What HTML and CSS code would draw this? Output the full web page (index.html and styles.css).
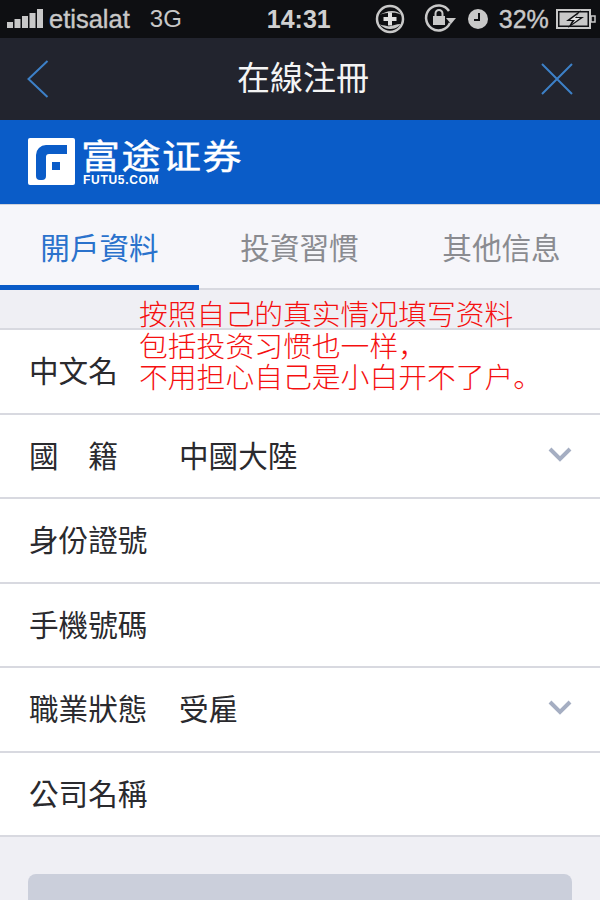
FILE: index.html
```html
<!DOCTYPE html>
<html lang="zh-Hant">
<head>
<meta charset="utf-8">
<title>在線注冊</title>
<link rel="stylesheet" href="styles.css">
</head>
<body>
<div class="screen">
  <div class="status">
    <svg class="signal" width="36" height="20" viewBox="0 0 36 20"><rect x="0" y="13" width="6" height="6"/><rect x="7.500" y="10" width="6" height="9"/><rect x="15" y="7" width="6" height="12"/><rect x="22.500" y="4" width="6" height="15"/><rect x="30" y="0" width="6" height="19"/></svg>
    <span class="carrier">etisalat</span>
    <span class="net">3G</span>
    <span class="time">14:31</span>
    <svg class="st-plus" width="30" height="30" viewBox="0 0 30 30"><circle cx="15" cy="15" r="13" fill="none" stroke="#c8c8c8" stroke-width="2.500"/><path d="M4 20C9 24 11 25 16 25C21 25 24 22 26 20C20 20 17 23 12 22C9 21.500 6 21 4 20Z" fill="#c8c8c8"/><path d="M4 11C9 9 12 7 17 7C21 7 24 8 26 11C21 8 18 9 13 9C9 9 7 10 4 11Z" fill="#c8c8c8"/><path d="M15 8.500V21.500M8.500 15H21.500" stroke="#e0e0e0" stroke-width="4"/></svg>
    <svg class="st-lock" width="32" height="30" viewBox="0 0 32 30"><path d="M26 19A12.500 12.500 0 1 1 25 7" fill="none" stroke="#c8c8c8" stroke-width="2.500"/><path d="M22 14H32L27 20Z" fill="#c8c8c8"/><rect x="9" y="12" width="12" height="9" fill="#c8c8c8"/><path d="M11.500 12V9.500A3.500 3.500 0 0 1 18.500 9.500V12" fill="none" stroke="#c8c8c8" stroke-width="2"/></svg>
    <svg class="st-clock" width="20" height="20" viewBox="0 0 20 20"><circle cx="10" cy="10" r="10" fill="#c8c8c8"/><path d="M11 4V11H6" fill="none" stroke="#0e0f12" stroke-width="2"/></svg>
    <span class="pct">32%</span>
    <svg class="st-batt" width="40" height="20" viewBox="0 0 40 20"><rect x="1" y="1" width="33" height="18" fill="none" stroke="#c8c8c8" stroke-width="2"/><rect x="3.500" y="3.500" width="28" height="13" fill="#c8c8c8"/><rect x="35" y="7" width="4" height="6" fill="none" stroke="#c8c8c8" stroke-width="1.500"/><path d="M25 1L10 12H16L12 19L28 8H20Z" fill="#0e0f12"/><path d="M22 5L14 11H19L16 15L24 9H19Z" fill="#e4e4e4"/></svg>
  </div>

  <header class="nav">
    <svg class="nav-icon" width="24" height="40" viewBox="0 0 24 40"><path d="M21.500 2L2.500 20L21.500 38" fill="none" stroke="#3d80c8" stroke-width="2"/></svg>
    <h1 class="nav-title">在線注冊</h1>
    <svg class="nav-icon" width="34" height="34" viewBox="0 0 34 34"><path d="M2 2L32 32M32 2L2 32" fill="none" stroke="#3d80c8" stroke-width="2"/></svg>
  </header>

  <div class="brand">
    <svg class="logo" width="47" height="47" viewBox="0 0 47 47"><rect width="47" height="47" rx="2" fill="#fff"/><path d="M8 38V17A10 10 0 0 1 18 7H39V16H21A3 3 0 0 0 18 19V38A4 4 0 0 1 14 42H12A4 4 0 0 1 8 38Z" fill="#0a5cc8"/><rect x="24" y="24" width="8" height="8" fill="#0a5cc8"/></svg>
    <div class="brand-text">
      <div class="brand-cn" lang="zh-Hans">富途证券</div>
      <div class="brand-en">FUTU5.COM</div>
    </div>
  </div>

  <nav class="tabs">
    <div class="tab tab-active">開戶資料</div>
    <div class="tab tab-mid">投資習慣</div>
    <div class="tab tab-last">其他信息</div>
  </nav>

  <div class="band"></div>

  <section class="form">
    <div class="row"><span class="label">中文名</span></div>
    <div class="row"><span class="label">國　籍</span><span class="value">中國大陸</span><svg class="chev" width="24" height="16" viewBox="0 0 24 16"><path d="M2 3L12 13L22 3" fill="none" stroke="#a5aec2" stroke-width="4"/></svg></div>
    <div class="row"><span class="label">身份證號</span></div>
    <div class="row"><span class="label">手機號碼</span></div>
    <div class="row"><span class="label">職業狀態</span><span class="value">受雇</span><svg class="chev" width="24" height="16" viewBox="0 0 24 16"><path d="M2 3L12 13L22 3" fill="none" stroke="#a5aec2" stroke-width="4"/></svg></div>
    <div class="row"><span class="label">公司名稱</span></div>
  </section>

  <div class="footer"><div class="submit"></div></div>

  <div class="note" lang="zh-Hans">按照自己的真实情况填写资料<br>包括投资习惯也一样，<br>不用担心自己是小白开不了户。</div>
</div>
</body>
</html>
```
FILE: styles.css
```css
html, body { margin: 0; padding: 0; }
body { background: #efeff4; }
.screen {
  position: relative;
  width: 600px;
  height: 900px;
  overflow: hidden;
  background: #efeff4;
  font-family: "Noto Sans CJK TC", "Noto Sans", sans-serif;
}
.status {
  height: 38px;
  box-sizing: border-box;
  background: #0e0f12;
  color: #c8c8c8;
  display: flex;
  align-items: center;
  padding: 0 0 0 7px;
  font-family: "Liberation Sans", Arial, sans-serif;
  font-size: 25.500px;
  line-height: 38px;
}
.signal { fill: #c8c8c8; margin-right: 6px; flex: none; }
.carrier { -webkit-text-stroke: 0.4px #c8c8c8; }
.net { margin-left: 20px; font-size: 24px; }
.time { margin-left: 85px; font-size: 25px; font-weight: bold; color: #d0d0d0; }
.st-plus { margin-left: 44px; flex: none; }
.st-lock { margin-left: 19px; flex: none; }
.st-clock { margin-left: 12px; flex: none; }
.pct { margin-left: 11px; font-size: 25px; -webkit-text-stroke: 0.4px #c8c8c8; }
.st-batt { margin-left: 7px; flex: none; }
.nav {
  height: 82px;
  background: #22242e;
  display: flex;
  align-items: center;
  justify-content: space-between;
  padding: 0 26px;
}
.nav-title {
  margin: 0 0 6px 16px;
  color: #f4f4f4;
  font-size: 33px;
  font-weight: 400;
  line-height: 76px;
}
.brand {
  background: #0a5cc8;
  display: flex;
  align-items: flex-start;
  gap: 6px;
  padding: 18px 0 0 28px;
  height: 66px;
  border-bottom: 1px solid #d0d2da;
  color: #fff;
}
.brand-cn {
  font-family: "Noto Sans CJK SC", sans-serif;
  font-size: 39px;
  line-height: 36px;
  margin-top: 1px;
  letter-spacing: 1.500px;
  -webkit-text-stroke: 0.5px #fff;
  transform: scaleY(0.87);
  transform-origin: top left;
}
.brand-en {
  font-family: "Liberation Sans", Arial, sans-serif;
  font-weight: bold;
  font-size: 12px;
  line-height: 13px;
  letter-spacing: 0.7px;
  padding-left: 2px;
  margin-top: -1px;
}
.tabs {
  display: flex;
  height: 85px;
  box-sizing: border-box;
  background: #f6f6fa;
  border-bottom: 2px solid #d8d9e0;
}
.tab {
  flex: none;
  height: 85px;
  box-sizing: border-box;
  text-align: center;
  color: #8a8b90;
  font-size: 29.600px;
  line-height: 84px;
}
.tab-active {
  width: 199px;
  color: #2a72cc;
  border-bottom: 5px solid #0a5cc8;
}
.tab-mid { width: 201px; }
.tab-last { width: 200px; padding-left: 3px; }
.band { height: 39px; }
.form { background: #fff; border-top: 2px solid #d8d9e0; margin-top: -1px; }
.row {
  height: 82.500px;
  border-bottom: 2px solid #d8d9e0;
  display: flex;
  align-items: center;
  padding: 0 28px 0 29px;
  font-size: 29.600px;
  line-height: 40px;
  color: #2a2a2e;
}
.label { width: 150px; margin-bottom: 2px; }
.value { flex: 1; margin-bottom: 2px; }
.chev { margin-left: auto; margin-top: -4px; }
.footer { padding-top: 37px; }
.submit {
  height: 60px;
  margin: 0 28px;
  border-radius: 8px;
  background: #cbcfdb;
}
.note {
  position: absolute;
  left: 139px;
  top: 297px;
  color: #f51010;
  font-family: "Noto Sans CJK SC", serif;
  font-size: 28.800px;
  line-height: 31.500px;
  font-weight: 300;
  white-space: nowrap;
}
```
